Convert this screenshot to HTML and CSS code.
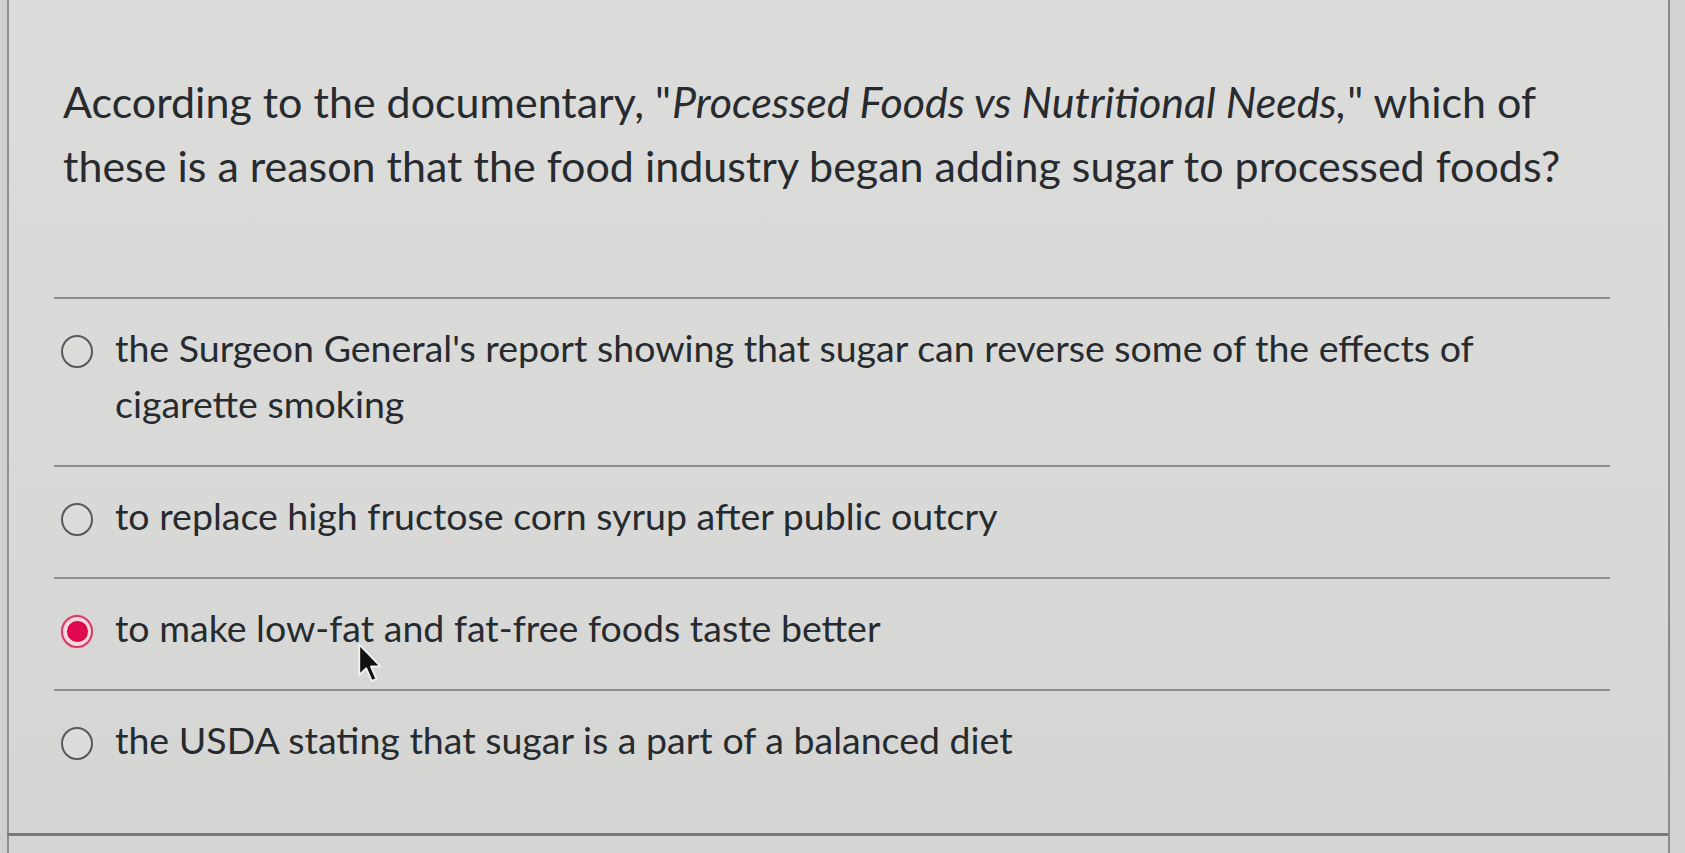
FILE: index.html
```html
<!DOCTYPE html>
<html lang="en">
<head>
<meta charset="utf-8">
<title>Quiz question</title>
<link rel="stylesheet" href="styles.css">
</head>
<body>
<div class="frame">
  <div class="panel">
    <p class="question">According to the documentary, "<em>Processed Foods vs Nutritional Needs,</em>" which of these is a reason that the food industry began adding sugar to processed foods?</p>
    <ul class="answers">
      <li class="answer">
        <span class="radio"></span>
        <span class="label">the Surgeon General's report showing that sugar can reverse some of the effects of cigarette smoking</span>
      </li>
      <li class="answer">
        <span class="radio"></span>
        <span class="label">to replace high fructose corn syrup after public outcry</span>
      </li>
      <li class="answer">
        <span class="radio radio-on"><span class="dot"></span></span>
        <span class="label">to make low-fat and fat-free foods taste better</span>
        <svg class="cursor" width="24" height="40" viewBox="0 0 11 18" aria-hidden="true">
          <path d="M0.6 0.6 L0.6 14.5 L3.8 11.4 L6.3 17.2 L8.4 16.3 L5.9 10.6 L10.3 10.6 Z" fill="#111" stroke="#f4f4f4" stroke-width="0.8" stroke-linejoin="round"/>
        </svg>
      </li>
      <li class="answer">
        <span class="radio"></span>
        <span class="label">the USDA stating that sugar is a part of a balanced diet</span>
      </li>
    </ul>
    <div class="footer-rule"></div>
  </div>
  <div class="outside"></div>
</div>
</body>
</html>
```

FILE: styles.css
```css
html, body {
  margin: 0;
  padding: 0;
}

body {
  width: 1685px;
  height: 853px;
  overflow: hidden;
  background: #d0d1ce;
  font-family: Lato, "Open Sans", "Liberation Sans", sans-serif;
  color: #272b30;
}

.frame {
  display: flex;
  height: 853px;
  padding-left: 7px;
  box-sizing: border-box;
}

.panel {
  width: 1556px;
  padding: 70px 58px 0 45px;
  border-left: 2px solid #8f9295;
  border-right: 2px solid #868b90;
  background: linear-gradient(180deg, #dcdcda 0%, #d9dad7 55%, #d5d6d3 100%);
  display: flex;
  flex-direction: column;
}

.outside {
  flex: 1;
  background: #d3d4d2;
}

.question {
  margin: 0 0 99px 0;
  padding: 0 0 0 9px;
  font-size: 43px;
  line-height: 64px;
  font-weight: 400;
}

.question em {
  font-style: italic;
  padding: 0 1px;
}

.answers {
  list-style: none;
  margin: 0;
  padding: 0;
}

.answer {
  position: relative;
  display: flex;
  align-items: flex-start;
  gap: 22px;
  padding: 21px 0 33px 7px;
  border-top: 2px solid #8c8d8e;
  font-size: 37.5px;
  line-height: 56px;
}

.label {
  flex: 1;
  padding-right: 100px;
}

.radio {
  flex: none;
  width: 32px;
  height: 33px;
  margin-top: 15px;
  box-sizing: border-box;
  border: 2px solid #55595d;
  border-radius: 50%;
  background: #dcddda;
  display: flex;
  align-items: center;
  justify-content: center;
}

.radio-on {
  border: 2px solid #cf3c68;
  background: #f5d5de;
  box-shadow: 0 0 0 1px #f0c2cf;
}

.dot {
  width: 19px;
  height: 19px;
  border-radius: 50%;
  background: #e0094f;
  box-shadow: 0 0 0 1px #c8063f;
}

.cursor {
  position: absolute;
  left: 304px;
  top: 64px;
}

.footer-rule {
  margin-top: 32px;
  margin-left: -47px;
  margin-right: -58px;
  border-top: 3px solid #77797b;
}
```
